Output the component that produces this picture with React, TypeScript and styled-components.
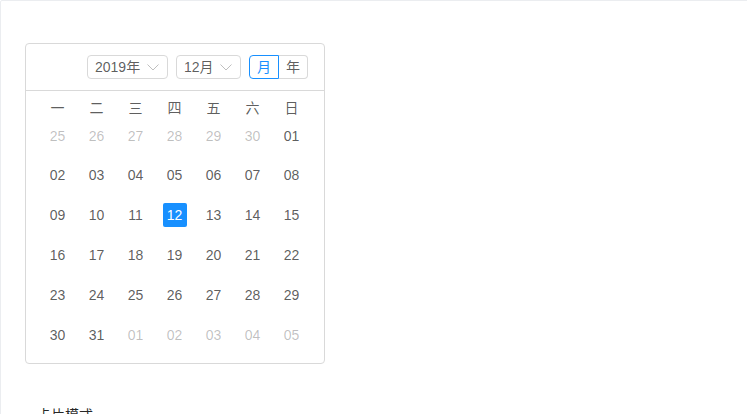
import React from "react"
import styled, { createGlobalStyle } from "styled-components"

const GlobalStyle = createGlobalStyle`
    html, body {
        margin: 0;
        padding: 0;
        overflow: hidden;
        background: #fff;
        font-family: "Liberation Sans", "Noto Sans CJK SC", sans-serif;
        font-size: 14px;
        color: rgba(0, 0, 0, 0.65);
    }
`

const CodeBox = styled.section`
    width: 780px;
    border: 1px solid #ebedf0;
    border-radius: 2px;
`

const Demo = styled.div`
    padding: 42px 24px 50px;
    border-bottom: 1px solid #ebedf0;
`

const Meta = styled.div`
    position: relative;
    padding: 18px 12px 12px;
    height: 40px;
`

const MetaTitle = styled.div`
    position: absolute;
    top: -12px;
    left: 12px;
    margin-left: 16px;
    padding: 1px 8px;
    background: #fff;
    font-size: 14px;
    line-height: 22px;
    color: rgba(0, 0, 0, 0.85);
`

const Card = styled.div`
    width: 298px;
    border: 1px solid #d9d9d9;
    border-radius: 4px;
    background: #fff;
`

const Header = styled.div`
    display: flex;
    justify-content: flex-end;
    align-items: center;
    gap: 8px;
    padding: 11px 16px 11px 0;
    border-bottom: 1px solid #d9d9d9;
`

const Select = styled.div<{ $w: number }>`
    box-sizing: border-box;
    display: flex;
    align-items: center;
    justify-content: space-between;
    width: ${p => p.$w}px;
    height: 24px;
    padding: 0 8px 0 7px;
    border: 1px solid #d9d9d9;
    border-radius: 4px;
    line-height: 22px;
    color: rgba(0, 0, 0, 0.65);
`

const Radios = styled.div`
    display: flex;
`

const RadioBtn = styled.div<{ $on?: boolean; $first?: boolean }>`
    height: 24px;
    box-sizing: border-box;
    padding: 0 7px;
    line-height: 22px;
    border: 1px solid ${p => (p.$on ? "#1890ff" : "#d9d9d9")};
    border-left-width: ${p => (p.$first ? 1 : 0)}px;
    border-radius: ${p => (p.$first ? "4px 0 0 4px" : "0 4px 4px 0")};
    color: ${p => (p.$on ? "#1890ff" : "rgba(0, 0, 0, 0.65)")};
`

const Body = styled.div`
    padding: 8px 12px 8px 12px;
`

const Grid = styled.div`
    display: grid;
    grid-template-columns: repeat(7, 39px);
    grid-template-rows: 18px 38px repeat(5, 40px);
`

const Week = styled.div`
    text-align: center;
    line-height: 18px;
    color: rgba(0, 0, 0, 0.65);
`

const Cell = styled.div`
    display: flex;
    align-items: center;
    justify-content: center;
`

const Day = styled.span<{ $muted?: boolean; $sel?: boolean }>`
    display: block;
    width: 24px;
    height: 24px;
    line-height: 24px;
    text-align: center;
    border-radius: 2px;
    background: ${p => (p.$sel ? "#1890ff" : "transparent")};
    color: ${p => (p.$sel ? "#fff" : p.$muted ? "rgba(0, 0, 0, 0.25)" : "rgba(0, 0, 0, 0.65)")};
`

const Arrow = () => (
    <svg width="12" height="7" viewBox="0 0 12 7" fill="none">
        <path d="M0.5 0.5 L6 6 L11.5 0.5" stroke="#bfbfbf" strokeWidth="1" />
    </svg>
)

const weeks = ["一", "二", "三", "四", "五", "六", "日"]

const days: { d: number; muted: boolean }[] = []
for (let d = 25; d <= 30; d++) days.push({ d, muted: true })
for (let d = 1; d <= 31; d++) days.push({ d, muted: false })
for (let d = 1; d <= 5; d++) days.push({ d, muted: true })

const pad = (n: number) => (n < 10 ? "0" + n : "" + n)

const App = () => (
    <>
        <GlobalStyle />
        <CodeBox>
            <Demo>
                <Card>
                    <Header>
                        <Select $w={81}>
                            <span>2019年</span>
                            <Arrow />
                        </Select>
                        <Select $w={65}>
                            <span>12月</span>
                            <Arrow />
                        </Select>
                        <Radios>
                            <RadioBtn $on $first>月</RadioBtn>
                            <RadioBtn>年</RadioBtn>
                        </Radios>
                    </Header>
                    <Body>
                        <Grid>
                            {weeks.map(w => (
                                <Week key={w}>{w}</Week>
                            ))}
                            {days.map((x, i) => (
                                <Cell key={i}>
                                    <Day $muted={x.muted} $sel={!x.muted && x.d === 12}>
                                        {pad(x.d)}
                                    </Day>
                                </Cell>
                            ))}
                        </Grid>
                    </Body>
                </Card>
            </Demo>
            <Meta>
                <MetaTitle>卡片模式</MetaTitle>
            </Meta>
        </CodeBox>
    </>
)

export default App
